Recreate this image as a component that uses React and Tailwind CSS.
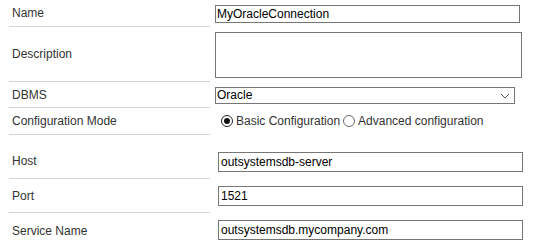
import { useState } from 'react'

const FONT = { fontFamily: '"Liberation Sans", Arial, sans-serif' }

function Row({ label, height, alignLabel = 'items-center', labelPad = '', last = false, children }) {
  return (
    <div className={`flex ${height}`}>
      <div
        className={`ml-[9px] flex w-[201px] shrink-0 ${alignLabel} ${labelPad} pl-[3px] text-[12px] text-[#333] ${
          last ? '' : 'border-b border-[#d4d4d4]'
        }`}
      >
        {label}
      </div>
      <div className="flex-1">{children}</div>
    </div>
  )
}

function Radio({ checked, label, onClick }) {
  return (
    <label className="flex cursor-pointer items-center gap-[3px]" onClick={onClick}>
      <span
        className={`flex h-[12px] w-[12px] items-center justify-center rounded-full border ${
          checked ? 'border-[#222]' : 'border-[#666]'
        } bg-white`}
      >
        {checked && <span className="h-[6px] w-[6px] rounded-full bg-[#111]" />}
      </span>
      <span className="text-[12px] text-[#333]">{label}</span>
    </label>
  )
}

export default function App() {
  const [mode, setMode] = useState('basic')

  const inputCls =
    'block h-[20px] border border-[#767676] bg-white px-[2px] text-[12px] text-black outline-none'

  return (
    <div className="h-[252px] w-[539px] bg-white" style={FONT}>
      <Row label="Name" height="h-[27px]">
        <input
          className="ml-[5px] mt-[5px] block h-[18px] w-[305px] border border-[#767676] bg-white px-[1px] text-[12px] text-black outline-none"
          defaultValue="MyOracleConnection"
        />
      </Row>
      <Row label="Description" height="h-[55px]">
        <textarea className="ml-[5px] mt-[5px] block h-[46px] w-[307px] resize-none border border-[#767676] bg-white outline-none" />
      </Row>
      <Row label="DBMS" height="h-[26px]">
        <div className="relative ml-[5px] mt-[5px] h-[17px] w-[300px]">
          <select className="block h-full w-full appearance-none border border-[#767676] bg-white px-[1px] text-[12px] leading-[15px] text-black outline-none">
            <option>Oracle</option>
            <option>SQL Server</option>
          </select>
          <svg
            className="pointer-events-none absolute right-[5px] top-[6px]"
            width="10"
            height="6"
            viewBox="0 0 10 6"
            fill="none"
          >
            <path d="M1 1l4 4 4-4" stroke="#555" strokeWidth="1" />
          </svg>
        </div>
      </Row>
      <Row label="Configuration Mode" height="h-[27px]">
        <div className="ml-[11px] flex h-[26px] items-center gap-[3px] pb-[1px]">
          <Radio checked={mode === 'basic'} label="Basic Configuration" onClick={() => setMode('basic')} />
          <Radio checked={mode === 'advanced'} label="Advanced configuration" onClick={() => setMode('advanced')} />
        </div>
      </Row>
      <Row label="Host" height="h-[44px]" alignLabel="items-end" labelPad="pb-[8px]">
        <input className={`ml-[8px] mt-[17px] w-[305px] ${inputCls}`} defaultValue="outsystemsdb-server" />
      </Row>
      <Row label="Port" height="h-[34px]">
        <input className={`ml-[8px] mt-[7px] w-[305px] ${inputCls}`} defaultValue="1521" />
      </Row>
      <Row label="Service Name" height="h-[39px]" alignLabel="items-start" labelPad="pt-[9px]" last>
        <input className={`ml-[8px] mt-[7px] w-[305px] ${inputCls}`} defaultValue="outsystemsdb.mycompany.com" />
      </Row>
    </div>
  )
}
